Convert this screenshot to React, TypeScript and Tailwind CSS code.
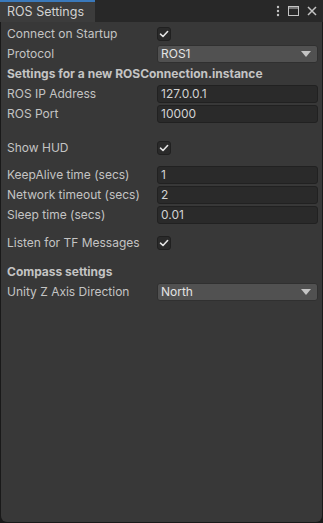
import React from "react";

const Check = () => (
  <div className="w-[14px] h-[14px] rounded-[3px] bg-[#2a2a2a] border border-[#202020] flex items-center justify-center">
    <svg width="10" height="10" viewBox="0 0 10 10">
      <path d="M1.5 5.2 L4 7.5 L8.6 2.5" stroke="#e4e4e4" strokeWidth="1.6" fill="none" strokeLinecap="round" strokeLinejoin="round" />
    </svg>
  </div>
);

const Field = ({ v }: { v: string }) => (
  <div className="h-[18px] w-full rounded-[3px] bg-[#2a2a2a] border border-[#212121] flex items-center px-[3px] text-[#d2d2d2]">{v}</div>
);

const Drop = ({ v }: { v: string }) => (
  <div className="h-[18px] w-full rounded-[3px] bg-[#515151] border border-[#303030] flex items-center px-[3px] text-[#e4e4e4] justify-between">
    <span>{v}</span>
    <svg width="10" height="6" viewBox="0 0 10 6" className="mr-[3px]">
      <path d="M0 0 L10 0 L5 6 Z" fill="#c4c4c4" />
    </svg>
  </div>
);

const Row = ({ label, children }: { label: string; children: React.ReactNode }) => (
  <div className="h-[20px] flex items-center">
    <div className="w-[156px] pl-[6px] shrink-0">{label}</div>
    <div className="flex-1 pr-[4px] flex items-center">{children}</div>
  </div>
);

export default function App() {
  return (
    <div className="w-[323px] h-[523px] bg-[#191919] flex flex-col text-[12px] text-[#c4c4c4]" style={{ fontFamily: "Inter, 'Noto Sans', sans-serif" }}>
      <div className="h-[22px] flex bg-[#282828] shrink-0">
        <div className="w-[95px] bg-[#3c3c3c] border-t-2 border-[#3a79bb] flex items-center pl-[7px] text-[#d2d2d2] text-[12.5px]">ROS Settings</div>
        <div className="flex-1 flex items-center justify-end pr-[6px] gap-[8px]">
          <svg width="4" height="12" viewBox="0 0 4 12"><circle cx="2" cy="2" r="1.2" fill="#c4c4c4" /><circle cx="2" cy="6" r="1.2" fill="#c4c4c4" /><circle cx="2" cy="10" r="1.2" fill="#c4c4c4" /></svg>
          <svg width="11" height="10" viewBox="0 0 11 10"><rect x="0.5" y="0.5" width="10" height="9" fill="none" stroke="#c4c4c4" /><line x1="0" y1="2" x2="11" y2="2" stroke="#c4c4c4" /></svg>
          <svg width="10" height="10" viewBox="0 0 10 10"><path d="M1 1 L9 9 M9 1 L1 9" stroke="#c4c4c4" strokeWidth="1.5" /></svg>
        </div>
      </div>
      <div className="flex-1 bg-[#383838] rounded-b-[6px] mx-px mb-px pt-[2px]">
        <Row label="Connect on Startup"><Check /></Row>
        <Row label="Protocol"><Drop v="ROS1" /></Row>
        <div className="h-[20px] flex items-center pl-[6px] font-bold">Settings for a new ROSConnection.instance</div>
        <Row label="ROS IP Address"><Field v="127.0.0.1" /></Row>
        <Row label="ROS Port"><Field v="10000" /></Row>
        <div className="h-[14px]" />
        <Row label="Show HUD"><Check /></Row>
        <div className="h-[7px]" />
        <Row label="KeepAlive time (secs)"><Field v="1" /></Row>
        <Row label="Network timeout (secs)"><Field v="2" /></Row>
        <Row label="Sleep time (secs)"><Field v="0.01" /></Row>
        <div className="h-[8px]" />
        <Row label="Listen for TF Messages"><Check /></Row>
        <div className="h-[9px]" />
        <div className="h-[20px] flex items-center pl-[6px] font-bold">Compass settings</div>
        <Row label="Unity Z Axis Direction"><Drop v="North" /></Row>
      </div>
    </div>
  );
}
